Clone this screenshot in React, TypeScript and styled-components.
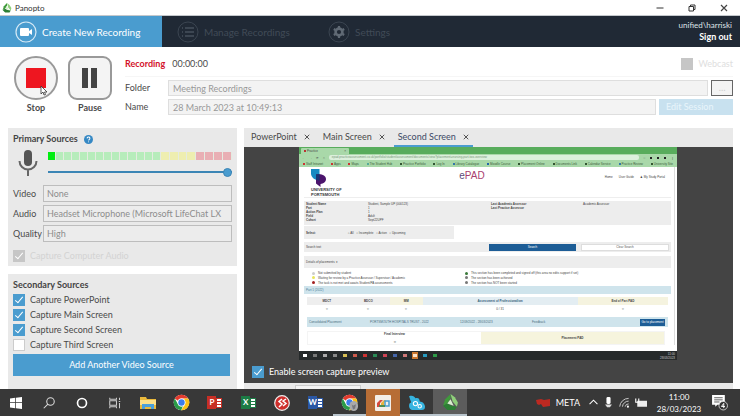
import React from "react";
import styled, { createGlobalStyle } from "styled-components";

const GlobalStyle = createGlobalStyle`
  *, *::before, *::after { box-sizing: border-box; }
  body { margin: 0; background: #fff; color: #4a4a4a; font: 9px/12px Lato, "Noto Sans", sans-serif; }
  button, input, select { font: inherit; color: inherit; margin: 0; }
  button { cursor: pointer; border: 0; padding: 0; background: none; }
  a { color: inherit; text-decoration: none; }
`;

const blue = "#4a9ccf";

/* ---------- window frame ---------- */
const Page = styled.div`
  min-height: 100vh;
  display: flex;
  flex-direction: column;
`;
const TitleBar = styled.header`
  height: 16px;
  display: flex;
  align-items: center;
  gap: 3px;
  padding: 0 0 0 2px;
  font-size: 8px;
  color: #333;
  border-bottom: 1px solid #c4c8cc;
`;
const WindowButtons = styled.div`
  margin-left: auto;
  display: flex;
`;
const WindowButton = styled.button`
  width: 32px;
  height: 15px;
  display: grid;
  place-items: center;
`;
const Nav = styled.nav`
  height: 31px;
  display: flex;
  background: #202935;
`;
const NavTab = styled.button<{ $active?: boolean; $width: number }>`
  width: ${(p) => p.$width}px;
  display: flex;
  align-items: center;
  gap: 5px;
  padding-left: 15px;
  font-size: 10px;
  white-space: nowrap;
  color: ${(p) => (p.$active ? "#fff" : "#414b57")};
  background: ${(p) => (p.$active ? blue : "transparent")};
`;
const Account = styled.div`
  margin-left: auto;
  padding: 3px 8px 0 0;
  text-align: right;
  font-size: 8px;
  color: #dfe3e8;
`;
const SignOut = styled.a`
  display: block;
  font-size: 9px;
  font-weight: 700;
  color: #fff;
`;

/* ---------- recording controls ---------- */
const Controls = styled.section`
  display: flex;
  gap: 10px;
  height: 81px;
  padding: 9px 7px 0 14px;
`;
const BigControl = styled.button`
  width: 44px;
  display: flex;
  flex-direction: column;
  align-items: center;
  align-self: flex-start;
  gap: 2px;
  font-size: 9px;
  font-weight: 700;
  position: relative;
`;
const Face = styled.span<{ $round?: boolean }>`
  width: 44px;
  height: 44px;
  display: grid;
  place-items: center;
  border: 2px solid #999;
  border-radius: ${(p) => (p.$round ? "50%" : "9px")};
  background: #f4f4f4;
`;
const Cursor = styled.svg`
  position: absolute;
  left: 26px;
  top: 29px;
`;
const Details = styled.div`
  flex: 1;
  min-width: 0;
  display: flex;
  flex-direction: column;
  padding-left: 3px;
`;
const StatusRow = styled.div`
  height: 21px;
  display: flex;
  align-items: flex-start;
  gap: 7px;
  padding-top: 2px;
  border-bottom: 1px solid #f6f6f6;
`;
const Status = styled.strong`
  color: #d3122b;
  font-size: 9px;
  font-weight: 700;
`;
const Webcast = styled.label`
  margin-left: auto;
  display: flex;
  align-items: center;
  gap: 6px;
  color: #dedede;
`;
const GreyBox = styled.input`
  appearance: none;
  width: 12px;
  height: 12px;
  background: #c6c6c6;
`;
const FieldRow = styled.div`
  display: flex;
  align-items: center;
  gap: 3px;
  margin-top: 3px;
`;
const FieldLabel = styled.label`
  width: 40px;
  flex: none;
`;
const TextField = styled.input`
  flex: 1;
  min-width: 0;
  height: 16px;
  padding: 0 4px;
  border: 1px solid #dedede;
  background: #f3f3f3;
  color: #999;
  outline: 0;
`;
const Browse = styled.button`
  width: 22px;
  height: 16px;
  border: 1px solid #666;
  background: #f3f3f3;
  color: #ccc;
  line-height: 8px;
`;
const SessionButton = styled.button`
  width: 74px;
  height: 16px;
  padding-left: 7px;
  display: flex;
  align-items: center;
  background: #c8e1ef;
  color: #e9f5fb;
`;

/* ---------- sources ---------- */
const Main = styled.main`
  flex: 1;
  display: flex;
  gap: 7px;
  padding: 0 7px 0 8px;
`;
const Sidebar = styled.aside`
  width: 229px;
  flex: none;
  display: flex;
  flex-direction: column;
  gap: 8px;
`;
const Panel = styled.section<{ $grow?: boolean }>`
  flex: ${(p) => (p.$grow ? 1 : "none")};
  padding: 4px 5px 3px;
  background: #e9e9e9;
`;
const PanelTitle = styled.h2`
  margin: 0;
  height: 14px;
  display: flex;
  align-items: center;
  gap: 6px;
  font-size: 9px;
  font-weight: 700;
  color: #444;
`;
const MicRow = styled.div`
  display: flex;
  gap: 10px;
  height: 39px;
  padding: 4px 0 0 5px;
`;
const Levels = styled.div`
  flex: 1;
  padding-top: 2px;
`;
const Meter = styled.div`
  display: flex;
  height: 8px;
`;
const MeterCell = styled.i<{ $tone: string; $wide?: boolean }>`
  flex: ${(p) => (p.$wide ? 9 : 8)};
  background: ${(p) => p.$tone};
  border-right: 1px solid #e4ebe0;
`;
const Volume = styled.input`
  appearance: none;
  display: block;
  width: 100%;
  height: 10px;
  margin-top: 7px;
  background: linear-gradient(#3b85b5, #3b85b5) center / 100% 2px no-repeat;
  &::-webkit-slider-thumb {
    appearance: none;
    width: 9px;
    height: 9px;
    border-radius: 50%;
    background: ${blue};
    border: 1px solid #3b85b5;
  }
`;
const SelectRow = styled.div`
  display: flex;
  align-items: center;
  margin-bottom: 3px;
`;
const SelectLabel = styled.label`
  width: 30px;
  flex: none;
`;
const Select = styled.select`
  appearance: none;
  flex: 1;
  min-width: 0;
  height: 17px;
  padding: 0 3px;
  border: 1px solid #bdbdbd;
  border-radius: 0;
  background: #ececec;
  color: #8c8c8c;
`;
const Check = styled.label<{ $disabled?: boolean }>`
  display: flex;
  align-items: center;
  gap: 5px;
  height: ${(p) => (p.$disabled ? 18 : 15)}px;
  padding-top: ${(p) => (p.$disabled ? 4 : 0)}px;
  color: ${(p) => (p.$disabled ? "#d3d3d3" : "#4a4a4a")};
`;
const CheckBox = styled.input`
  appearance: none;
  flex: none;
  width: 12px;
  height: 12px;
  display: grid;
  place-items: center;
  border: 1px solid #ccc;
  background: #fff;
  &:checked { background: ${blue}; border-color: ${blue}; }
  &:checked:disabled { background: #c6c6c6; border-color: #c6c6c6; }
  &:checked::before {
    content: "";
    width: 4px;
    height: 8px;
    margin-top: -2px;
    border: solid #fff;
    border-width: 0 1px 1px 0;
    transform: rotate(40deg);
  }
`;
const AddButton = styled.button`
  width: calc(100% - 2px);
  height: 22px;
  margin-top: 2px;
  background: ${blue};
  color: #fff;
`;

/* ---------- preview ---------- */
const Viewer = styled.section`
  flex: 1;
  min-width: 0;
  display: flex;
  flex-direction: column;
  background: #e9e9e9;
`;
const ViewTabs = styled.div`
  height: 19px;
  display: flex;
  gap: 5px;
  padding-left: 3px;
`;
const ViewTab = styled.button<{ $active?: boolean }>`
  display: flex;
  align-items: center;
  gap: 7px;
  padding: 0 4px;
  color: ${(p) => (p.$active ? "#3d4a66" : "#4a4a4a")};
  border-bottom: 2px solid ${(p) => (p.$active ? blue : "transparent")};
`;
const Stage = styled.div`
  background: #444;
  padding: 0 56px 0 55px;
`;
const EnableRow = styled.label`
  height: 23px;
  display: flex;
  align-items: center;
  gap: 5px;
  margin-left: -47px;
  color: #fff;
`;
const Strip = styled.div`
  height: 6px;
  padding: 2px 0 0 51px;
`;
const StripTab = styled.div`
  width: 66px;
  height: 4px;
  border: 1px solid #ccc;
  border-bottom: 0;
  background: #f3f3f3;
`;

/* ---------- browser window shown in the preview ---------- */
const Browser = styled.div`
  background: #fff;
  color: #444;
  font-family: "Liberation Sans", sans-serif;
  font-size: 3px;
  line-height: 4px;
  white-space: nowrap;
`;
const BrowserTabs = styled.div`
  height: 7px;
  padding: 1px 2px 0;
  background: #58ac5c;
`;
const BrowserTab = styled.div`
  width: 48px;
  height: 6px;
  display: flex;
  justify-content: space-between;
  align-items: center;
  padding: 0 3px;
  background: #a9d8a9;
  border-radius: 1px 1px 0 0;
`;
const AddressRow = styled.div`
  height: 7px;
  display: flex;
  align-items: center;
  gap: 4px;
  padding: 0 3px;
  background: #a9d8a9;
`;
const Address = styled.div`
  flex: 1;
  height: 5px;
  padding-left: 3px;
  border-radius: 2px;
  background: #dcf0dc;
  color: #799779;
`;
const Bookmarks = styled.div`
  height: 6px;
  display: flex;
  align-items: center;
  justify-content: space-between;
  padding: 0 4px;
  background: #a9d8a9;
  color: #3c5c3c;
`;
const Mark = styled.span<{ $tone: string }>`
  &::before {
    content: "";
    display: inline-block;
    width: 2px;
    height: 2px;
    margin-right: 1px;
    background: ${(p) => p.$tone};
  }
`;
const Site = styled.div`
  margin-right: 2px;
  padding: 0 3px 0 5px;
  border-right: 1px solid #ddd;
`;
const SiteHead = styled.div`
  height: 31px;
  display: grid;
  grid-template-columns: 5fr auto 6fr;
  border-bottom: 1px solid #eee;
  margin-bottom: 3px;
`;
const Brand = styled.div`
  display: flex;
  flex-direction: column;
  padding: 2px 0 0 7px;
  font-size: 4px;
  font-weight: 700;
  line-height: 5px;
  color: #333;
`;
const SiteName = styled.div`
  padding-top: 3px;
  font-size: 10px;
  line-height: 12px;
  color: #a83e6e;
`;
const Accent = styled.span`
  color: #5b4a78;
`;
const SiteLinks = styled.div`
  display: flex;
  justify-content: flex-end;
  gap: 6px;
  padding: 8px 6px 0 0;
`;
const Info = styled.div`
  height: 24px;
  display: grid;
  grid-template-columns: 62px 123px 92px 1fr;
  padding: 1px 2px;
  background: #ededed;
`;
const Filter = styled.div`
  width: 41%;
  height: 13px;
  display: flex;
  gap: 32px;
  align-items: center;
  margin: 1px 0 3px;
  padding-left: 2px;
  background: #ededed;
`;
const Grey = styled.div<{ $tall?: boolean }>`
  height: ${(p) => (p.$tall ? 12 : 10)}px;
  display: grid;
  grid-template-columns: 1fr 87px 88px;
  align-items: center;
  gap: 5px;
  margin-bottom: ${(p) => (p.$tall ? 3 : 4)}px;
  padding: 0 2px;
  background: #ededed;
`;
const SiteButton = styled.button<{ $fill?: boolean }>`
  height: 7px;
  border: 1px solid ${(p) => (p.$fill ? "#1d5d96" : "#ddd")};
  background: ${(p) => (p.$fill ? "#1d5d96" : "#fff")};
  color: ${(p) => (p.$fill ? "#fff" : "#555")};
  line-height: 4px;
`;
const Legend = styled.div`
  height: 14px;
  display: grid;
  grid-template-columns: 153px 1fr;
  padding: 0 8px;
`;
const Dot = styled.div<{ $tone: string }>`
  display: flex;
  align-items: center;
  gap: 3px;
  &::before {
    content: "";
    width: 3px;
    height: 3px;
    border-radius: 50%;
    background: ${(p) => p.$tone};
  }
`;
const BlueBand = styled.div`
  height: 8px;
  padding: 2px;
  margin: 1px 0 3px;
  background: #cfe4ec;
  color: #4a7d96;
`;
const Hours = styled.table`
  width: calc(100% - 6px);
  margin: 0 3px;
  border-collapse: collapse;
  table-layout: fixed;
  text-align: center;
  th, td { height: 8px; padding: 0; line-height: 4px; }
  th { background: #eee; }
  th.warm { background: #f5f3df; }
  th.cool { background: #e3edf2; color: #35607a; }
`;
const PlacementBand = styled.div`
  height: 10px;
  display: grid;
  grid-template-columns: 61px 90px 72px 1fr 25px;
  align-items: center;
  margin: 4px 3px 4px;
  padding: 0 3px 0 2px;
  background: #cfe4ec;
  color: #4a6d7c;
`;
const Finals = styled.div`
  height: 14px;
  display: grid;
  grid-template-columns: 173px 1fr;
  margin: 0 6px 6px 3px;
  text-align: center;
  font-weight: 700;
  border: 1px solid #f4f4f4;
`;
const Warm = styled.div`
  background: #f6f4dd;
  padding-top: 4px;
`;
const MiniBar = styled.div`
  height: 9px;
  display: flex;
  align-items: center;
  gap: 4px;
  padding: 0 2px 0 3px;
  background: #262a2b;
  color: #ccc;
`;
const MiniIcon = styled.i<{ $tone: string; $lit?: boolean }>`
  width: 6px;
  height: 7px;
  border: 1px solid ${(p) => (p.$lit ? "#c9762f" : "#262a2b")};
  border-width: 2px 1px;
  background: ${(p) => p.$tone};
`;
const MiniClock = styled.span`
  margin-left: auto;
  line-height: 4px;
  text-align: right;
`;

/* ---------- taskbar ---------- */
const Taskbar = styled.footer`
  height: 27px;
  display: flex;
  background: #383838;
  color: #fff;
`;
const TaskGroup = styled.div<{ $width: number }>`
  width: ${(p) => p.$width}px;
  flex: none;
  display: grid;
  grid-auto-flow: column;
  grid-auto-columns: 1fr;
`;
const Task = styled.button<{ $bg?: string; $open?: boolean }>`
  display: grid;
  place-items: center;
  background: ${(p) => p.$bg ?? "transparent"};
  box-shadow: ${(p) => (p.$open ? "inset 0 -2px #b9c4cc" : "none")};
`;
const Tray = styled.div`
  margin-left: auto;
  display: flex;
  align-items: center;
  gap: 5px;
  padding-right: 12px;
`;
const Stock = styled.button`
  display: flex;
  align-items: center;
  gap: 5px;
  margin-right: 4px;
  font-size: 9px;
`;
const Clock = styled.time`
  width: 54px;
  text-align: center;
  font-size: 8px;
`;

const Svg = ({ size = 16, h, vb = "0 0 16 16", children }: { size?: number; h?: number; vb?: string; children: React.ReactNode }) => (
  <svg width={size} height={h ?? size} viewBox={vb} fill="none" aria-hidden="true">
    {children}
  </svg>
);

const PanoptoLogo = ({ size }: { size: number }) => (
  <Svg size={size}>
    <path d="M8 0 3 5 1 11l4-2 3-5z" fill="#3f9a3b" />
    <path d="M8 0l2 7 4 5 1-4-3-5z" fill="#8fd07a" />
    <path d="M1 11l4 4h7l2-3-5-1-4-2z" fill="#2c7f34" />
    <path d="M5 9l3-4 3 6z" fill="#d9efcf" />
  </Svg>
);

const ChromeLogo = ({ profile }: { profile?: boolean }) => (
  <Svg size={17} vb="0 0 48 48">
    <circle cx="24" cy="24" r="22" fill="#fff" />
    <path d="M24 2a22 22 0 0 1 19 11H24a11 11 0 0 0-10 6L5 13A22 22 0 0 1 24 2" fill="#e33b2e" />
    <path d="M43 13a22 22 0 0 1-20 33l10-16a11 11 0 0 0 0-12l-3-5z" fill="#fbc116" />
    <path d="M5 13l9.500 16.500A11 11 0 0 0 28 34l-5 12A22 22 0 0 1 5 13" fill="#2a9b48" />
    <circle cx="24" cy="24" r="11" fill="#fff" />
    <circle cx="24" cy="24" r="9" fill="#3b7ded" />
    {profile && <path d="M24 32a12 12 0 0 1 24 0v4c0 6-5 12-12 12s-12-6-12-12z" fill="#a9a9ab" />}
    {profile && <path d="M30 29l4 4 8-4-2 12-6 3z" fill="#77777c" />}
  </Svg>
);

const Sheet = styled.span<{ $tone: string }>`
  display: flex;
  align-items: center;
  width: 15px;
  height: 13px;
  color: #fff;
  font-size: 8px;
  font-weight: 700;
  line-height: 13px;
  &::before {
    content: attr(data-letter);
    width: 9px;
    height: 13px;
    background: ${(p) => p.$tone};
    text-align: center;
  }
  &::after {
    content: "";
    width: 6px;
    height: 10px;
    border: 1px solid ${(p) => p.$tone};
    background: repeating-linear-gradient(#fff 0 2px, ${(p) => p.$tone} 2px 3px);
  }
`;

const greens = Array.from({ length: 14 }, (_, i) => (i === 0 ? "#00ee10" : "#b6ecbb"));
const upper = ["#eeeeb0", "#eeeeb0", "#eeeeb0", "#eeeeb0", "#e9afb4", "#e9afb4", "#e9afb4", "#e9afb4"];
const marks: [string, string][] = [
  ["Staff Intranet", "#c33"], ["Apps", "#c33"], ["Maps", "#c33"], ["The Student Hub", "#5a9"],
  ["Practice Portfolio", "#353"], ["Log In", "#353"], ["Library Catalogue", "#37a"], ["Moodle Course", "#26a"],
  ["Placement Online", "#353"], ["Documents Link", "#353"], ["Calendar Service", "#353"], ["Practice Review", "#37a"], ["University Site", "#353"],
];
const sources: [string, boolean][] = [
  ["Capture PowerPoint", true],
  ["Capture Main Screen", true],
  ["Capture Second Screen", true],
  ["Capture Third Screen", false],
];
const inputs: [string, string][] = [
  ["Video", "None"],
  ["Audio", "Headset Microphone (Microsoft LifeChat LX"],
  ["Quality", "High"],
];
const miniTones = ["#fff", "#777", "#aaa", "#888", "#d7bf55", "#cc5b4d", "#c33", "#2a8a55", "#c45", "#46a", "#c77", "#fbe3c8", "#279bc0", "#2d9b48"];

const CloseX = ({ size = 6 }: { size?: number }) => (
  <Svg size={size} vb="0 0 8 8">
    <path d="M1 1l6 6M7 1L1 7" stroke="#444" strokeWidth="1.200" />
  </Svg>
);

const BrowserPreview = () => (
  <Browser>
    <BrowserTabs>
      <BrowserTab><Mark $tone="#b33">Practice</Mark><span>×</span></BrowserTab>
    </BrowserTabs>
    <AddressRow>
      <span>←</span><span>→</span><span>⟳</span><span>⌂</span>
      <Address>epad.practiceassessment.co.uk/portfolio/student/assessment/documents/view?placement=nursing-part-two-overview</Address>
      <span>☆</span><Mark $tone="#222" /><Mark $tone="#222" /><Mark $tone="#222" /><span>⋮</span>
    </AddressRow>
    <Bookmarks>
      {marks.map(([name, tone]) => <Mark key={name} $tone={tone}>{name}</Mark>)}
    </Bookmarks>
    <Site>
      <SiteHead>
        <Brand>
          <Svg size={15} h={18} vb="0 0 30 36">
            <path d="M0 0h17v23C6 22 0 16 0 9z" fill="#168ac2" />
            <path d="M10 11c11-2 20 2 20 9 0 6-5 9-11 10v6l-9-7z" fill="#4b146c" />
            <path d="M10 11l7-1v13c-3 0-5-1-7-2z" fill="#193775" />
          </Svg>
          <span>UNIVERSITY OF<br />PORTSMOUTH</span>
        </Brand>
        <SiteName><Accent>e</Accent>PAD</SiteName>
        <SiteLinks><span>Home</span><span>User Guide</span><span>♟ My Study Portal</span></SiteLinks>
      </SiteHead>
      <Info>
        <b>Student Name<br />Part<br />Action Plan<br />Field<br />Cohort</b>
        <span>Student, Sample UP (000123)<br />1<br />1<br />Adult<br />Sept22UPF</span>
        <b>Last Academic Assessor<br />Last Practice Assessor</b>
        <a href="#assessor">Academic Assessor</a>
      </Info>
      <Filter><b>Select:</b><span>○ All &nbsp; ○ Incomplete &nbsp; ○ Action &nbsp; ○ Upcoming</span></Filter>
      <Grey>
        <span>Search text</span>
        <SiteButton $fill>Search</SiteButton>
        <SiteButton>Clear Search</SiteButton>
      </Grey>
      <Grey $tall><span>Details of placements ▾</span></Grey>
      <Legend>
        <Dot $tone="#ccc">Not submitted by student</Dot>
        <Dot $tone="#3a7a3a">This section has been completed and signed off (this area no edits support if set)</Dot>
        <Dot $tone="#e8e45a">Waiting for review by a Practice Assessor / Supervisor / Academic</Dot>
        <Dot $tone="#777">The section has been achieved</Dot>
        <Dot $tone="#a32020">The task is not met and awaits Student/PA assessments</Dot>
        <Dot $tone="#777">The section has NOT been started</Dot>
      </Legend>
      <BlueBand>Part 1 (2022)</BlueBand>
      <Hours>
        <colgroup><col width="11%" /><col width="12%" /><col width="9%" /><col width="43%" /><col width="25%" /></colgroup>
        <thead><tr><th>MDCT</th><th>BDCO</th><th className="warm">MM</th><th className="cool">Assessment of Professionalism</th><th className="warm">End of Part PAD</th></tr></thead>
        <tbody><tr><td>━</td><td>━</td><td>━</td><td>0 / 31</td><td>━</td></tr></tbody>
      </Hours>
      <PlacementBand>
        <span>Consolidated Placement</span><span>PORTSMOUTH HOSPITALS TRUST - 2022</span><span>12/09/2022 - 28/03/2023</span><span>Feedback</span>
        <SiteButton $fill>Go to placement</SiteButton>
      </PlacementBand>
      <Finals>
        <div>Final Interview<br /><br />━</div>
        <Warm>Placement PAD</Warm>
      </Finals>
    </Site>
    <MiniBar>
      {miniTones.map((tone, i) => <MiniIcon key={i} $tone={tone} $lit={i === 11} />)}
      <MiniClock>11:00<br />28/03/2023</MiniClock>
    </MiniBar>
  </Browser>
);

export default function App() {
  return (
    <Page>
      <GlobalStyle />
      <TitleBar>
        <PanoptoLogo size={10} />
        <span>Panopto</span>
        <WindowButtons>
          <WindowButton aria-label="Minimize"><Svg size={8}><path d="M1 8h14" stroke="#333" strokeWidth="2" /></Svg></WindowButton>
          <WindowButton aria-label="Restore"><Svg size={8}><path d="M2 5h9v9H2zM5 5V2h9v9h-3" stroke="#333" strokeWidth="2" /></Svg></WindowButton>
          <WindowButton aria-label="Close"><CloseX size={8} /></WindowButton>
        </WindowButtons>
      </TitleBar>

      <Nav>
        <NavTab $active $width={162}>
          <Svg size={22} vb="0 0 22 22">
            <circle cx="11" cy="11" r="10" stroke="#d5e9f5" strokeWidth="1.200" />
            <rect x="5" y="7" width="9" height="8" rx="1" fill="#fff" />
            <path d="M14 10l3-2v6l-3-2z" fill="#fff" />
          </Svg>
          Create New Recording
        </NavTab>
        <NavTab $width={151}>
          <Svg size={22} vb="0 0 22 22">
            <circle cx="11" cy="11" r="10" stroke="#3b4551" />
            <path d="M8 7h9M8 11h9M8 15h9M5 7h1M5 11h1M5 15h1" stroke="#46505c" strokeWidth="1.500" />
          </Svg>
          Manage Recordings
        </NavTab>
        <NavTab $width={110}>
          <Svg size={22} vb="0 0 22 22">
            <circle cx="11" cy="11" r="10" stroke="#3b4551" />
            <circle cx="11" cy="11" r="3.400" stroke="#606a75" strokeWidth="2.600" />
            <path d="M11 5v2M11 15v2M5.800 8l1.700 1M14.500 13l1.700 1M5.800 14l1.700-1M14.500 9l1.700-1" stroke="#606a75" strokeWidth="2.200" />
          </Svg>
          Settings
        </NavTab>
        <Account>
          unified\harriski
          <SignOut href="#signout">Sign out</SignOut>
        </Account>
      </Nav>

      <Controls>
        <BigControl>
          <Face $round><Svg size={20} vb="0 0 20 20"><path d="M0 0h20v20H0z" fill="#ee1620" /></Svg></Face>
          Stop
          <Cursor width="8" height="11" viewBox="0 0 8 11" aria-hidden="true">
            <path d="M1 1v8l2-2 1 3 1.500-.5L4.500 7H7z" fill="#fff" stroke="#333" strokeWidth=".8" />
          </Cursor>
        </BigControl>
        <BigControl>
          <Face><Svg size={20} vb="0 0 20 20"><path d="M2 0h6v20H2zM11 0h6v20h-6z" fill="#444" /></Svg></Face>
          Pause
        </BigControl>
        <Details>
          <StatusRow>
            <Status>Recording</Status>
            <span>00:00:00</span>
            <Webcast><GreyBox type="checkbox" disabled />Webcast</Webcast>
          </StatusRow>
          <FieldRow>
            <FieldLabel htmlFor="folder">Folder</FieldLabel>
            <TextField id="folder" defaultValue="Meeting Recordings" readOnly />
            <Browse aria-label="Browse folders">…</Browse>
          </FieldRow>
          <FieldRow>
            <FieldLabel htmlFor="name">Name</FieldLabel>
            <TextField id="name" defaultValue="28 March 2023 at 10:49:13" readOnly />
            <SessionButton>Edit Session</SessionButton>
          </FieldRow>
        </Details>
      </Controls>

      <Main>
        <Sidebar>
          <Panel>
            <PanelTitle>
              Primary Sources
              <Svg size={9}>
                <circle cx="8" cy="8" r="8" fill="#3588c4" />
                <path d="M5.500 6a2.500 2.500 0 1 1 3.500 2.300L8 9.500M8 11.500v1.500" stroke="#fff" strokeWidth="1.800" />
              </Svg>
            </PanelTitle>
            <MicRow>
              <Svg size={20} h={26} vb="0 0 20 26">
                <rect x="6" y="0" width="8" height="16" rx="4" fill="#555" />
                <path d="M1.500 11a8.500 8.500 0 0 0 17 0M10 20v6" stroke="#666" strokeWidth="2" />
              </Svg>
              <Levels>
                <Meter>
                  {greens.map((t, i) => <MeterCell key={i} $tone={t} />)}
                  {upper.map((t, i) => <MeterCell key={i} $tone={t} $wide />)}
                </Meter>
                <Volume type="range" aria-label="Volume" defaultValue={100} />
              </Levels>
            </MicRow>
            {inputs.map(([name, value]) => (
              <SelectRow key={name}>
                <SelectLabel htmlFor={name}>{name}</SelectLabel>
                <Select id={name}><option>{value}</option></Select>
              </SelectRow>
            ))}
            <Check $disabled>
              <CheckBox type="checkbox" defaultChecked disabled />
              Capture Computer Audio
            </Check>
          </Panel>
          <Panel $grow>
            <PanelTitle>Secondary Sources</PanelTitle>
            {sources.map(([name, on]) => (
              <Check key={name}>
                <CheckBox type="checkbox" defaultChecked={on} />
                {name}
              </Check>
            ))}
            <AddButton>Add Another Video Source</AddButton>
          </Panel>
        </Sidebar>

        <Viewer>
          <ViewTabs>
            <ViewTab>PowerPoint <CloseX /></ViewTab>
            <ViewTab>Main Screen <CloseX /></ViewTab>
            <ViewTab $active>Second Screen <CloseX /></ViewTab>
          </ViewTabs>
          <Stage>
            <BrowserPreview />
            <EnableRow>
              <CheckBox type="checkbox" defaultChecked />
              Enable screen capture preview
            </EnableRow>
          </Stage>
          <Strip><StripTab /></Strip>
        </Viewer>
      </Main>

      <Taskbar>
        <TaskGroup $width={131}>
          <Task aria-label="Start"><Svg size={12}><path d="M0 2l7-1v6H0zM8 1l8-1v7H8zM0 8h7v7l-7-1zM8 8h8v8l-8-1z" fill="#fff" /></Svg></Task>
          <Task aria-label="Search"><Svg size={12}><circle cx="10" cy="6" r="5" stroke="#ddd" strokeWidth="1.400" /><path d="M6.500 9.500L1 15" stroke="#ddd" strokeWidth="1.400" /></Svg></Task>
          <Task aria-label="Cortana"><Svg size={12}><circle cx="8" cy="8" r="6" stroke="#fff" strokeWidth="2.200" /></Svg></Task>
          <Task aria-label="Task view"><Svg size={12}><path d="M1 1v2h9V1M1 15v-2h9v2M1 5h9v6H1zM14 1v3M14 8v7M13 6h2" stroke="#ccc" strokeWidth="1.400" /></Svg></Task>
        </TaskGroup>
        <TaskGroup $width={336}>
          <Task aria-label="File Explorer"><Svg size={16}><path d="M0 2h6l1 2h9v10H0z" fill="#e9b93c" /><path d="M0 5h16v5H0z" fill="#fbe08a" /><path d="M2 14V9h12v5h-3v-2H5v2z" fill="#4aa0dc" /></Svg></Task>
          <Task aria-label="Chrome"><ChromeLogo /></Task>
          <Task aria-label="PowerPoint"><Sheet $tone="#c72f25" data-letter="P" /></Task>
          <Task aria-label="Excel"><Sheet $tone="#1c7b45" data-letter="X" /></Task>
          <Task aria-label="Remote session"><Svg size={16}><circle cx="8" cy="8" r="7.300" fill="#cf2f2c" stroke="#eee" strokeWidth="1.200" /><path d="M8 4L5 6.500 8 9l-3 3M9 11l3-2.500L9 6l3-2" stroke="#fff" strokeWidth="1.500" /></Svg></Task>
          <Task aria-label="Word"><Sheet $tone="#2b57a4" data-letter="W" /></Task>
          <Task aria-label="Chrome profile" $open><ChromeLogo profile /></Task>
          <Task aria-label="Recorder" $bg="#b76d35"><Svg size={16}><rect width="16" height="16" rx="1" fill="#f3eee8" /><path d="M2 12V8l3-3h3L5 8v4z" fill="#d64b3c" /><path d="M6 12V8l3-3h2L9 8v4z" fill="#e9b23e" /><path d="M10 11V6h4v5z" stroke="#4a9ccf" strokeWidth="1.500" /><path d="M4 10h6v2H4z" fill="#4d8c52" /></Svg></Task>
          <Task aria-label="Cloud files" $open><Svg size={17}><path d="M1 2c3-1 5 0 6 2 3-1 4 1 4 3 3 0 5 3 5 5s-1 3-3 3H5c-3 0-4-2-4-4s1-3 2-3z" fill="#36b4e0" /><circle cx="7" cy="9" r="2" stroke="#fff" /><circle cx="11" cy="11.500" r="1.600" stroke="#fff" /></Svg></Task>
          <Task aria-label="Panopto" $bg="#5c5c5c" $open><PanoptoLogo size={17} /></Task>
        </TaskGroup>
        <Tray>
          <Stock>
            <Svg size={15} h={10} vb="0 0 15 10"><path d="M0 2l5-1 3 1 6-1v7l-7 1-2-3-2 1-2-1z" fill="#bd2921" /></Svg>
            META
          </Stock>
          <Svg size={9}><path d="M1 11l7-7 7 7" stroke="#fff" strokeWidth="1.800" /></Svg>
          <Svg size={11}><rect x="5" y="0" width="6" height="10" rx="2" fill="#fff" /><path d="M3 11h10l-3 4H6z" fill="#ddd" /></Svg>
          <Svg size={11}><path d="M1 14A13 13 0 0 1 14 2M5 14a9 9 0 0 1 9-8M9 14a5 5 0 0 1 5-4" stroke="#ccc" strokeWidth="1.400" /><circle cx="13" cy="14" r="1.500" fill="#fff" /></Svg>
          <Svg size={12}><path d="M3 5h13v8H3z" fill="#eee" /><path d="M1 2v5h4V2" stroke="#fff" strokeWidth="1.500" /></Svg>
          <Clock>11:00<br />28/03/2023</Clock>
          <Svg size={17}>
            <path d="M1 1h12v9H6l-2 2v-2H1z" fill="#fff" />
            <path d="M3 3.500h8M3 5.500h8M3 7.500h5" stroke="#444" strokeWidth=".8" />
            <circle cx="11.500" cy="11" r="4" fill="#333" stroke="#ddd" strokeWidth=".8" />
            <path d="M12 13.300V8.800L9.800 11.800h3.400" stroke="#fff" strokeWidth=".9" />
          </Svg>
        </Tray>
      </Taskbar>
    </Page>
  );
}
